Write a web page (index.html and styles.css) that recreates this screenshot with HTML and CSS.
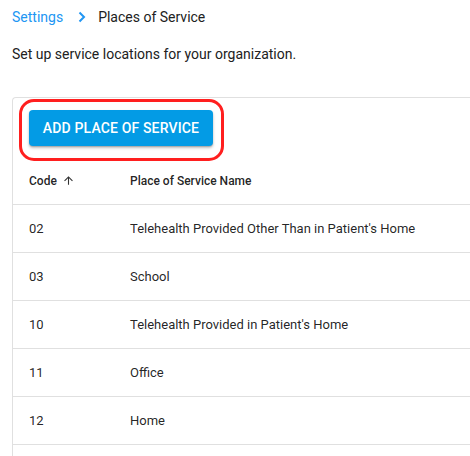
FILE: index.html
```html
<!DOCTYPE html>
<html>
<head>
<meta charset="utf-8">
<link rel="stylesheet" href="styles.css">
</head>
<body>
<div class="page">
  <nav class="crumbs">
    <a class="crumb-link">Settings</a>
    <svg class="crumb-sep" width="10" height="12" viewBox="0 0 10 12"><path d="M2.5 1.5 L7 6 L2.5 10.5" fill="none" stroke="#2196f3" stroke-width="2"/></svg>
    <span class="crumb-current">Places of Service</span>
  </nav>
  <p class="desc">Set up service locations for your organization.</p>
  <div class="card">
    <div class="toolbar">
      <button class="btn">ADD PLACE OF SERVICE</button>
      <div class="highlight"></div>
    </div>
    <div class="row head">
      <div class="c-code">Code
        <svg class="sort" width="13" height="13" viewBox="0 0 24 24"><path d="M4 12l1.41 1.41L11 7.83V20h2V7.83l5.58 5.59L20 12l-8-8-8 8z" fill="#333"/></svg>
      </div>
      <div class="c-name">Place of Service Name</div>
    </div>
    <div class="row"><div class="c-code">02</div><div class="c-name">Telehealth Provided Other Than in Patient's Home</div></div>
    <div class="row"><div class="c-code">03</div><div class="c-name">School</div></div>
    <div class="row"><div class="c-code">10</div><div class="c-name">Telehealth Provided in Patient's Home</div></div>
    <div class="row"><div class="c-code">11</div><div class="c-name">Office</div></div>
    <div class="row"><div class="c-code">12</div><div class="c-name">Home</div></div>
    <div class="row filler"></div>
  </div>
</div>
</body>
</html>
```
FILE: styles.css
```css
html, body {
  margin: 0;
  padding: 0;
  background: #fff;
  overflow: hidden;
  height: 456px;
}
body {
  font-family: Roboto, "Liberation Sans", sans-serif;
  color: rgba(0,0,0,0.87);
}
.page {
  padding: 0 0 0 12px;
  width: 520px;
}
.crumbs {
  display: flex;
  align-items: center;
  height: 34px;
  font-size: 14px;
}
.crumb-link {
  color: #2196f3;
}
.crumb-sep {
  margin: 0 11px 0 14px;
}
.crumb-current {
  color: #212121;
}
.desc {
  margin: 10px 0 0 0;
  font-size: 14px;
  line-height: 20px;
  color: #212121;
}
.card {
  margin-top: 33px;
  border: 1px solid #e0e0e0;
  border-right: none;
  border-radius: 4px 0 0 0;
}
.toolbar {
  position: relative;
  padding: 12px 16px 11px;
}
.btn {
  display: block;
  width: 184px;
  height: 36px;
  border: none;
  border-radius: 4px;
  background: #039be5;
  color: #fff;
  font-family: Roboto, "Liberation Sans", sans-serif;
  font-size: 14px;
  font-weight: 500;
  letter-spacing: 0.15px;
  box-shadow: 0 2px 3px rgba(0,0,0,0.25), 0 1px 1px rgba(0,0,0,0.14);
  padding: 0;
}
.highlight {
  position: absolute;
  box-sizing: border-box;
  left: 6px;
  top: 1px;
  width: 205px;
  height: 62px;
  border: 3.5px solid #ff1f1f;
  border-radius: 15px;
  pointer-events: none;
}
.row {
  display: flex;
  align-items: center;
  height: 47px;
  border-bottom: 1px solid #e0e0e0;
  font-size: 13px;
}
.row.head {
  font-weight: 500;
  font-size: 12px;
  color: rgba(0,0,0,0.87);
}
.c-code {
  width: 117px;
  padding-left: 16px;
  box-sizing: border-box;
  flex: none;
  display: flex;
  align-items: center;
}
.sort {
  margin-left: 5px;
}
.c-name {
  flex: 1;
}
```
